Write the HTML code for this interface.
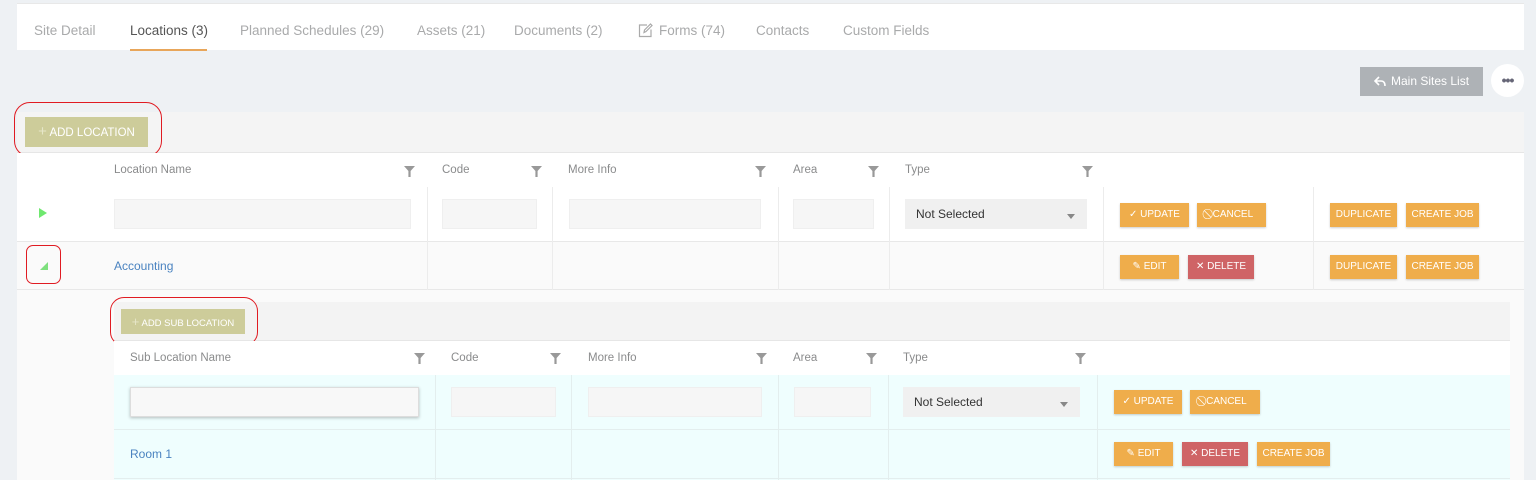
<!DOCTYPE html>
<html><head><meta charset="utf-8"><style>
*{box-sizing:border-box;margin:0;padding:0}
body{width:1536px;height:480px;overflow:hidden;background:#eef1f4;font-family:"Liberation Sans",sans-serif;position:relative}
.a{position:absolute}
.tab{position:absolute;top:23px;font-size:13.5px;color:#a9aaab}
.lbl{position:absolute;font-size:11.5px;color:#8a8b8c}
.flt{position:absolute;width:11px;height:11px}
.inp{position:absolute;background:#f6f6f6;border:1px solid #efefef}
.sel{position:absolute;background:#f0f0f0;font-size:12px;color:#333;padding:8px 11px}
.sel:after{content:"";position:absolute;right:12px;top:15px;border:4px solid transparent;border-top:5px solid #888}
.vl{position:absolute;width:1px;background:#ececec}
.hl{position:absolute;height:1px;background:#e6e6e6}
.btn{position:absolute;height:24px;background:#efad4b;color:#fff;font-size:10px;line-height:24px;text-align:center;box-shadow:0 1px 2px rgba(0,0,0,.2);white-space:nowrap}
.red{background:#cf6466}
.olive{position:absolute;background:#cdcc9a;color:#fff;text-align:center;white-space:nowrap}
.ell{position:absolute;border:1.5px solid #e01b22;border-radius:14px}
.link{position:absolute;font-size:12px;color:#4a83c0}
</style></head><body>
<svg width="0" height="0" style="position:absolute"><defs><symbol id="f" viewBox="0 0 11 11"><path d="M0 0H11L6.6 5V11H4.4V5Z" fill="#999"/></symbol></defs></svg>

<div class="a" style="left:17px;top:3px;width:1507px;height:47px;background:#fff;border-top:1px solid #e8e8e8"></div>
<div class="tab" style="left:34px">Site Detail</div>
<div class="tab" style="left:130px;color:#555">Locations (3)</div>
<div class="a" style="left:130px;top:49px;width:77px;height:2px;background:#e8a65a"></div>
<div class="tab" style="left:240px">Planned Schedules (29)</div>
<div class="tab" style="left:417px">Assets (21)</div>
<div class="tab" style="left:514px">Documents (2)</div>
<svg class="a" style="left:638px;top:23px" width="15" height="15" viewBox="0 0 15 15"><path d="M9 2H1.5V13.5H13V6.5M6 9.5L6.5 7L12.5 1L14 2.5L8 8.5Z" fill="none" stroke="#aaa" stroke-width="1.2"/></svg>
<div class="tab" style="left:659px">Forms (74)</div>
<div class="tab" style="left:756px">Contacts</div>
<div class="tab" style="left:843px">Custom Fields</div>

<div class="a" style="left:1360px;top:67px;width:123px;height:29px;background:#aeb2b6;color:#fff;font-size:12px;line-height:29px;padding-left:31px">Main Sites List</div>
<svg class="a" style="left:1374px;top:75px" width="12" height="12" viewBox="0 0 12 12"><path d="M5 2L1 6L5 10M1 6H7Q11 6 11 11" fill="none" stroke="#fff" stroke-width="1.6"/></svg>
<div class="a" style="left:1491px;top:64px;width:33px;height:33px;border-radius:50%;background:#fff;text-align:center;line-height:33px;font-size:14px;color:#667;font-weight:bold;letter-spacing:-1px">•••</div>

<div class="a" style="left:17px;top:112px;width:1507px;height:41px;background:#f4f4f4;border-bottom:1px solid #e6e6e6"></div>
<div class="olive" style="left:25px;top:117px;width:123px;height:30px;line-height:30px;font-size:11.5px"><span style="font-size:15px;color:#e6e6c8">+</span> ADD LOCATION</div>
<div class="ell" style="left:14px;top:102px;width:148px;height:55px;border-radius:16px"></div>

<div class="a" style="left:17px;top:153px;width:1507px;height:88px;background:#fff"></div>
<div class="lbl" style="left:114px;top:164px">Location Name</div><svg class="flt" style="left:404px;top:166px"><use href="#f"/></svg>
<div class="lbl" style="left:442px;top:164px">Code</div><svg class="flt" style="left:531px;top:166px"><use href="#f"/></svg>
<div class="lbl" style="left:568px;top:164px">More Info</div><svg class="flt" style="left:755px;top:166px"><use href="#f"/></svg>
<div class="lbl" style="left:793px;top:164px">Area</div><svg class="flt" style="left:868px;top:166px"><use href="#f"/></svg>
<div class="lbl" style="left:905px;top:164px">Type</div><svg class="flt" style="left:1082px;top:166px"><use href="#f"/></svg>
<div class="a" style="left:39px;top:208px;border:5px solid transparent;border-left:8px solid #6fe86f;border-right:0"></div>
<div class="inp" style="left:114px;top:199px;width:297px;height:30px"></div>
<div class="inp" style="left:442px;top:199px;width:95px;height:30px"></div>
<div class="inp" style="left:569px;top:199px;width:192px;height:30px"></div>
<div class="inp" style="left:793px;top:199px;width:81px;height:30px"></div>
<div class="sel" style="left:905px;top:199px;width:182px;height:30px">Not Selected</div>
<div class="btn" style="left:1120px;top:203px;width:69px">✓ UPDATE</div>
<div class="btn" style="left:1197px;top:203px;width:69px">⃠ CANCEL</div>
<div class="btn" style="left:1330px;top:203px;width:67px">DUPLICATE</div>
<div class="btn" style="left:1406px;top:203px;width:73px">CREATE JOB</div>

<div class="a" style="left:17px;top:241px;width:1507px;height:49px;background:#fafafa;border-top:1px solid #e8e8e8;border-bottom:1px solid #e8e8e8"></div>
<div class="a" style="left:40px;top:262px;width:0;height:0;border-left:8px solid transparent;border-bottom:8px solid #7ee07e"></div>
<div class="ell" style="left:26px;top:245px;width:35px;height:39px;border-radius:7px"></div>
<div class="link" style="left:114px;top:259px">Accounting</div>
<div class="btn" style="left:1120px;top:255px;width:59px">✎ EDIT</div>
<div class="btn red" style="left:1188px;top:255px;width:66px">✕ DELETE</div>
<div class="btn" style="left:1330px;top:255px;width:67px">DUPLICATE</div>
<div class="btn" style="left:1406px;top:255px;width:73px">CREATE JOB</div>
<div class="vl" style="left:427px;top:187px;height:103px"></div>
<div class="vl" style="left:552px;top:187px;height:103px"></div>
<div class="vl" style="left:778px;top:187px;height:103px"></div>
<div class="vl" style="left:889px;top:187px;height:103px"></div>
<div class="vl" style="left:1103px;top:187px;height:103px"></div>
<div class="vl" style="left:1313px;top:187px;height:103px"></div>

<div class="a" style="left:17px;top:290px;width:1507px;height:190px;background:#fafafa"></div>
<div class="a" style="left:114px;top:302px;width:1396px;height:39px;background:#f3f3f3;border-bottom:1px solid #e6e6e6"></div>
<div class="olive" style="left:121px;top:309px;width:124px;height:25px;line-height:25px;font-size:9.5px"><span style="font-size:13px;color:#e6e6c8">+</span> ADD SUB LOCATION</div>
<div class="ell" style="left:110px;top:297px;width:148px;height:49px;border-radius:14px"></div>
<div class="a" style="left:114px;top:341px;width:1396px;height:34px;background:#fff"></div>
<div class="lbl" style="left:130px;top:352px">Sub Location Name</div><svg class="flt" style="left:414px;top:353px"><use href="#f"/></svg>
<div class="lbl" style="left:451px;top:352px">Code</div><svg class="flt" style="left:550px;top:353px"><use href="#f"/></svg>
<div class="lbl" style="left:588px;top:352px">More Info</div><svg class="flt" style="left:756px;top:353px"><use href="#f"/></svg>
<div class="lbl" style="left:793px;top:352px">Area</div><svg class="flt" style="left:866px;top:353px"><use href="#f"/></svg>
<div class="lbl" style="left:903px;top:352px">Type</div><svg class="flt" style="left:1075px;top:353px"><use href="#f"/></svg>
<div class="a" style="left:114px;top:375px;width:1396px;height:105px;background:#effefe"></div>
<div class="hl" style="left:114px;top:429px;width:1396px;background:#e3eeee"></div>
<div class="hl" style="left:114px;top:478px;width:1396px;background:#e3eeee"></div>
<div class="inp" style="left:130px;top:387px;width:289px;height:30px;background:#f8f8f8;border:1px solid #ddd;box-shadow:0 1px 3px rgba(0,0,0,.25)"></div>
<div class="inp" style="left:451px;top:387px;width:105px;height:30px"></div>
<div class="inp" style="left:588px;top:387px;width:174px;height:30px"></div>
<div class="inp" style="left:794px;top:387px;width:77px;height:30px"></div>
<div class="sel" style="left:903px;top:387px;width:177px;height:30px">Not Selected</div>
<div class="btn" style="left:1114px;top:390px;width:68px">✓ UPDATE</div>
<div class="btn" style="left:1190px;top:390px;width:70px">⃠ CANCEL</div>
<div class="link" style="left:130px;top:447px">Room 1</div>
<div class="btn" style="left:1114px;top:442px;width:59px">✎ EDIT</div>
<div class="btn red" style="left:1182px;top:442px;width:66px">✕ DELETE</div>
<div class="btn" style="left:1257px;top:442px;width:73px">CREATE JOB</div>
<div class="vl" style="left:435px;top:375px;height:105px;background:#e3eeee"></div>
<div class="vl" style="left:571px;top:375px;height:105px;background:#e3eeee"></div>
<div class="vl" style="left:778px;top:375px;height:105px;background:#e3eeee"></div>
<div class="vl" style="left:888px;top:375px;height:105px;background:#e3eeee"></div>
<div class="vl" style="left:1097px;top:375px;height:105px;background:#e3eeee"></div>
</body></html>
